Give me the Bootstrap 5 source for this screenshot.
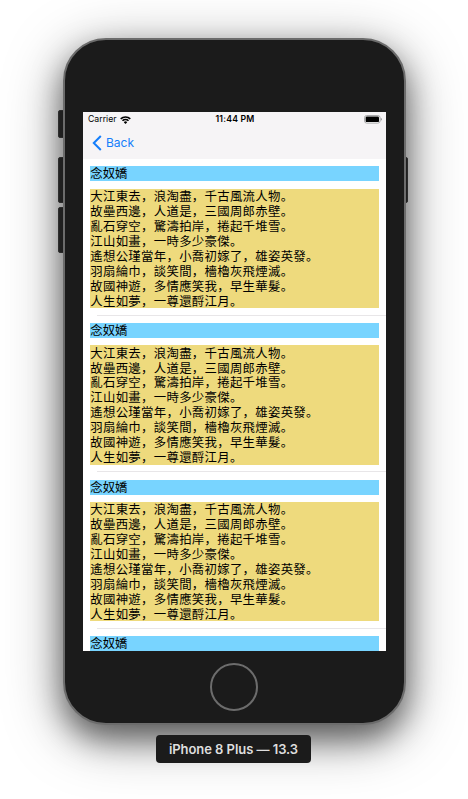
<!DOCTYPE html>
<html lang="zh-Hans">
<head>
  <meta charset="UTF-8" />
  <meta name="viewport" content="width=device-width, initial-scale=1" />
  <title>iPhone 8 Plus</title>
  <link href="https://cdn.jsdelivr.net/npm/bootstrap@5.3.0/dist/css/bootstrap.min.css" rel="stylesheet" />
  <style>
    body {
      height: 799px;
      overflow: hidden;
      background: #fff;
      font-family: Inter, "Noto Sans CJK SC", sans-serif;
    }
    .phone {
      width: 343px;
      height: 687px;
      margin: 38px 0 0 62.5px;
      padding: 72px 18px 0 18.5px;
      background: #1b1b1b;
      border: 2px solid #6c6c6c;
      border-radius: 43px;
      box-shadow: 0 14px 30px rgba(0,0,0,0.5), 0 12px 60px rgba(0,0,0,0.36);
    }
    .side-key {
      width: 6px;
      background: #333;
      border: 1px solid #454545;
      border-radius: 2px 0 0 2px;
      z-index: -1;
    }
    .key-mute { left: 57.5px; top: 110px; height: 28px; }
    .key-up { left: 57.5px; top: 157px; height: 46px; }
    .key-down { left: 57.5px; top: 207px; height: 46px; }
    .key-power { left: 402px; top: 157px; height: 46px; border-radius: 0 2px 2px 0; }
    .screen {
      width: 303px;
      height: 539px;
      background: #fff;
      color: #000;
    }
    .top-area { height: 47px; background: #f6f4f6; }
    .status-bar { height: 15px; padding: 0 4px 0 5px; font-size: 8.7px; line-height: 15px; }
    .status-side { flex: 1 1 0; }
    .status-time { font-weight: 600; letter-spacing: 0.2px; }
    .back-link { height: 32px; padding-left: 9px; font-size: 12px; color: #147efb; }
    .poem { padding: 7.4px 7px 7.4px 7.3px; position: relative; }
    .poem::after {
      content: "";
      position: absolute;
      left: 14px;
      right: 0;
      bottom: 0;
      height: 1px;
      background: #e8e6e8;
    }
    .poem-title, .poem-text {
      font-family: "Noto Sans CJK SC", sans-serif;
      font-size: 12.4px;
      line-height: 14.93px;
      white-space: nowrap;
    }
    .poem-title { height: 14.93px; background: #78d4ff; }
    .poem-text { height: 119.5px; margin-top: 7.4px; padding-top: 0.3px; background: #eeda7d; letter-spacing: 0.3px; }
    .home-button {
      width: 48px;
      height: 48px;
      margin: 12px 1px 0 0;
      border: 2px solid #6c6c6c;
    }
    .device-label {
      width: 155px;
      height: 28px;
      margin: 10px 0 0 156px;
      padding-top: 1px;
      background: #1b1b1b;
      color: #dedede;
      border-radius: 4px;
      font-size: 13px;
      font-weight: 600;
      letter-spacing: -0.05px;
    }
  </style>
</head>
<body>
  <div class="side-key key-mute position-absolute"></div>
  <div class="side-key key-up position-absolute"></div>
  <div class="side-key key-down position-absolute"></div>
  <div class="side-key key-power position-absolute"></div>

  <div class="phone d-flex flex-column">
    <div class="screen overflow-hidden flex-shrink-0">
      <div class="top-area">
        <div class="status-bar d-flex align-items-center">
          <div class="status-side d-flex align-items-center gap-1">
            <span>Carrier</span>
            <svg width="11" height="8" viewBox="0 0 11 8">
              <path d="M0.7 2.9a7 7 0 0 1 9.6 0M2.5 4.8a4.3 4.3 0 0 1 6 0" fill="none" stroke="#000" stroke-width="1.6"/>
              <path d="M5.5 7.9L3.8 6.2a2.4 2.4 0 0 1 3.4 0z"/>
            </svg>
          </div>
          <div class="status-time">11:44 PM</div>
          <div class="status-side d-flex justify-content-end">
            <svg width="18" height="9" viewBox="0 0 18 9">
              <rect x="0.5" y="0.5" width="15.6" height="7.6" rx="2.2" fill="#fff" stroke="#a8a8aa"/>
              <rect x="1.6" y="1.5" width="13.4" height="5.6" rx="1.2"/>
              <path d="M16.9 3v2.7q1-.3 1-1.35T16.9 3z" fill="#888"/>
            </svg>
          </div>
        </div>
        <div class="back-link d-flex align-items-center">
          <svg width="10" height="16" viewBox="0 0 10 16">
            <path d="M8.8 1L1.8 8l7 7" fill="none" stroke="#147efb" stroke-width="2"/>
          </svg>
          <span class="ps-1">Back</span>
        </div>
      </div>
      <div id="poemList"></div>
    </div>
    <div class="home-button rounded-circle flex-shrink-0 align-self-center"></div>
  </div>
  <div class="device-label d-flex align-items-center justify-content-center position-relative">iPhone 8 Plus — 13.3</div>

  <script src="https://cdn.jsdelivr.net/npm/bootstrap@5.3.0/dist/js/bootstrap.bundle.min.js"></script>
  <script>
    const lines = [
      "大江東去，浪淘盡，千古風流人物。",
      "故壘西邊，人道是，三國周郎赤壁。",
      "亂石穿空，驚濤拍岸，捲起千堆雪。",
      "江山如畫，一時多少豪傑。",
      "遙想公瑾當年，小喬初嫁了，雄姿英發。",
      "羽扇綸巾，談笑間，檣櫓灰飛煙滅。",
      "故國神遊，多情應笑我，早生華髮。",
      "人生如夢，一尊還酹江月。",
    ];
    const list = document.getElementById("poemList");
    for (let i = 0; i < 4; i++) {
      // the last cell only has room for its title
      const text = i < 3 ? `<div class="poem-text">${lines.join("<br>")}</div>` : "";
      list.innerHTML += `
        <div class="poem">
          <div class="poem-title">念奴嬌</div>
          ${text}
        </div>`;
    }
  </script>
</body>
</html>
